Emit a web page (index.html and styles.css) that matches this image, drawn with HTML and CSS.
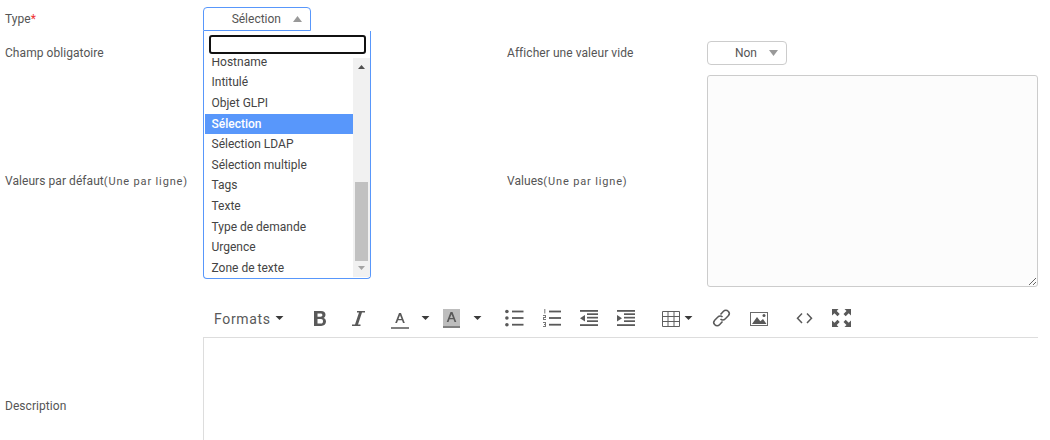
FILE: index.html
```html
<!DOCTYPE html>
<html lang="fr">
<head>
<meta charset="utf-8">
<title>Champ</title>
<link rel="stylesheet" href="styles.css">
</head>
<body>
<form class="form">
  <div class="label">Type<span class="req">*</span></div>
  <div class="field field-type">
    <div class="select select-open"><span class="select-text">Sélection</span><span class="arrow arrow-up"></span></div>
    <div class="dropdown">
      <input class="search" type="text" aria-label="Recherche">
      <div class="results">
        <ul class="options">
          <li>Hostname</li>
          <li>Intitulé</li>
          <li>Objet GLPI</li>
          <li class="active">Sélection</li>
          <li>Sélection LDAP</li>
          <li>Sélection multiple</li>
          <li>Tags</li>
          <li>Texte</li>
          <li>Type de demande</li>
          <li>Urgence</li>
          <li>Zone de texte</li>
        </ul>
        <div class="scrollbar">
          <span class="sb-up"></span>
          <span class="sb-thumb"></span>
          <span class="sb-down"></span>
        </div>
      </div>
    </div>
  </div>
  <div class="spacer"></div>
  <div class="spacer"></div>

  <div class="label">Champ obligatoire</div>
  <div></div>
  <div class="label">Afficher une valeur vide</div>
  <div class="field">
    <div class="select select-non"><span class="select-text">Non</span><span class="arrow arrow-down"></span></div>
  </div>

  <div class="label">Valeurs par défaut<small>(Une par ligne)</small></div>
  <div></div>
  <div class="label">Values<small>(Une par ligne)</small></div>
  <textarea class="area" aria-label="Values"></textarea>

  <div class="label label-desc">Description</div>
  <div class="editor">
    <div class="toolbar">
      <span class="formats">Formats</span><span class="caret c-formats"></span>
      <svg class="ic m26" viewBox="0 0 20 20"><path fill="#595959" fill-rule="evenodd" d="M4 3h7c3 0 4.500 1.500 4.500 3.800 0 1.500-.8 2.600-2 3.200 1.700.5 2.500 1.900 2.500 3.600 0 2.700-2 4.400-4.800 4.400H4zm3.500 2.500v3.300h3c1.200 0 1.900-.6 1.900-1.700s-.7-1.600-1.900-1.600zm0 5.500v4.500h3.500c1.300 0 2-.8 2-2.300s-.7-2.200-2-2.200z"/></svg>
      <svg class="ic m19" viewBox="0 0 20 20"><path fill="#595959" d="M8 3h8v1.600h-3L9 16.400h2.500V18H3v-1.600h3L10 4.600H8z"/></svg>
      <svg class="ic m22" viewBox="0 0 20 20"><path fill="#595959" d="M8 5h2l3.800 10h-1.800l-1-2.800H7l-1 2.800H4.200zm1 2.200-1.500 3.700h3z"/><rect y="19" width="18" height="2" fill="#808080"/></svg>
      <span class="caret m10"></span>
      <svg class="ic m12" viewBox="0 0 20 20"><rect x="1" y="1" width="17" height="17" fill="#bdbdbd"/><path fill="#595959" d="M8.500 4h2l3.800 10h-1.800l-1-2.800H7.500l-1 2.800H4.700zm1 2.200L8 9.900h3z"/><rect x="1" y="18" width="17" height="2" fill="#808080"/></svg>
      <span class="caret m11"></span>
      <svg class="ic m22" viewBox="0 0 20 20"><g fill="#595959"><circle cx="2.900" cy="3.500" r="1.800"/><circle cx="2.900" cy="10" r="1.800"/><circle cx="2.900" cy="16.700" r="1.800"/><rect x="8" y="2.600" width="11.500" height="1.800"/><rect x="8" y="9.100" width="11.500" height="1.800"/><rect x="8" y="15.800" width="11.500" height="1.800"/></g></svg>
      <svg class="ic m18" viewBox="0 0 20 20"><g fill="#595959"><rect x="7" y="2.600" width="12" height="1.800"/><rect x="7" y="9.100" width="12" height="1.800"/><rect x="7" y="15.800" width="12" height="1.800"/><rect x="2.300" y="1" width="1" height="4.500" fill="#777"/><path fill="#777" d="M1 7h3v3H2v1h2v1H1V9h2V8H1zM1 14h3v5H1v-1h2v-1H2v-1h1v-1H1z"/></g></svg>
      <svg class="ic m17" viewBox="0 0 20 20"><g fill="#595959"><rect x="1" y="2" width="18" height="1.800"/><rect x="8" y="5.300" width="11" height="1.700"/><rect x="8" y="8.800" width="11" height="1.700"/><rect x="8" y="12.300" width="11" height="1.700"/><rect x="1" y="16.200" width="18" height="1.800"/><path d="M6 7v6.500l-5-3.200z"/></g></svg>
      <svg class="ic m17" viewBox="0 0 20 20"><g fill="#595959"><rect x="1" y="2" width="18" height="1.800"/><rect x="8" y="5.300" width="11" height="1.700"/><rect x="8" y="8.800" width="11" height="1.700"/><rect x="8" y="12.300" width="11" height="1.700"/><rect x="1" y="16.200" width="18" height="1.800"/><path d="M1 7v6.500l5-3.200z"/></g></svg>
      <svg class="ic m25" viewBox="0 0 20 20"><path fill="none" stroke="#5f5f5f" d="M1.500 3.500h17v15h-17zM1.500 8.500h17M1.500 13.500h17M7 3.500v15M13 3.500v15"/></svg>
      <span class="caret m3"></span>
      <svg class="ic m18" viewBox="0 0 20 20"><g fill="none" stroke="#595959" stroke-width="1.500"><path d="M9.500 6.500l3-3.300a3.200 3.200 0 0 1 4.700 0 3.200 3.200 0 0 1 .1 4.500l-3.200 3.300a3.200 3.200 0 0 1-4.600 0"/><path d="M11.500 13.500l-3 3.300a3.200 3.200 0 0 1-4.700 0 3.200 3.200 0 0 1-.1-4.500l3.200-3.300a3.200 3.200 0 0 1 4.600 0"/></g></svg>
      <svg class="ic m18" viewBox="0 0 20 20"><path fill="#6a6a6a" fill-rule="evenodd" d="M1 4h18v14H1zm1 1v12h16V5z"/><path fill="#595959" d="M3 16 8 9l3.300 4.300L14 11l3.500 5z"/><circle cx="15" cy="7.500" r="1.500" fill="#595959"/></svg>
      <svg class="ic m25" viewBox="0 0 20 20"><path fill="none" stroke="#595959" stroke-width="1.500" d="M8 5.500 3.500 10.200 8 15M13 5.500l4.500 4.700L13 15"/></svg>
      <svg class="ic m17" viewBox="0 0 20 20"><path fill="#595959" d="M1 1h6.500L5.700 3l3 3L6.500 8.200l-3-3L1 7.500zM20 1v6.500l-2.300-2.300-3 3L12.500 6l3-3-2-2zM1 19v-6.500l2.500 2.300 3-3L8.700 14l-3 3 1.800 2zM20 19h-6.500l2-2-3-3 2.200-2.200 3 3 2.300-2.300z"/></svg>
    </div>
    <div class="editor-body"></div>
  </div>
</form>
</body>
</html>
```
FILE: styles.css
```css
* { box-sizing: border-box; }
html, body { margin: 0; height: 100%; overflow: hidden; background: #fff; }
body { font-family: Roboto, "Liberation Sans", sans-serif; font-size: 12px; color: #555; }

.form {
  display: grid;
  grid-template-columns: 198px 304px 200px 331px;
  grid-template-rows: 24px 24px 212px 210px;
  row-gap: 10px;
  padding: 7px 0 0 5px;
  align-items: center;
}
.form > .label-desc { margin-top: 7px; }

.label { letter-spacing: 0.06px; white-space: nowrap; }
.label small { font-size: 11px; letter-spacing: 0.85px; }
.req { color: #e33; }

.field { align-self: stretch; position: relative; }

.select {
  height: 24px;
  display: flex;
  align-items: center;
  justify-content: flex-end;
  background: #fff;
  border: 1px solid #ccc;
  border-radius: 4px;
}
.select-open {
  width: 108px;
  padding-right: 8px;
  border-color: #5897fb;
  border-radius: 4px 4px 0 0;
}
.select-non { width: 80px; padding-right: 8px; }
.select-text { margin-right: 12px; }
.arrow { width: 9px; height: 6px; background: #999; }
.arrow-up { clip-path: polygon(50% 0, 100% 100%, 0 100%); }
.arrow-down { clip-path: polygon(0 0, 100% 0, 50% 100%); }

.dropdown {
  position: absolute;
  top: 24px;
  left: 0;
  z-index: 5;
  width: 168px;
  height: 248px;
  background: #fff;
  border: 1px solid #5897fb;
  border-top: 0;
  border-radius: 0 0 4px 4px;
  padding-top: 4px;
  display: flex;
  flex-direction: column;
}
.search {
  display: block;
  width: 157px;
  height: 19px;
  margin: 0 0 4px 5px;
  padding: 0 4px;
  background: #fff;
  border: 2px solid #111;
  border-radius: 3px;
  outline: none;
  flex: none;
}
.results { flex: none; height: 219px; display: flex; overflow: hidden; margin-left: 1px; }
.options {
  list-style: none;
  margin: -6.200px 0 0;
  padding: 0;
  width: 148px;
  flex: none;
}
.options li {
  height: 20.600px;
  line-height: 20.600px;
  padding-left: 6.500px;
  color: #444;
  white-space: nowrap;
}
.options .active { background: #5897fb; color: #fff; font-weight: 500; }

.scrollbar {
  width: 17px;
  background: #f1f1f1;
  display: flex;
  flex-direction: column;
  align-items: center;
}
.sb-up {
  width: 7px; height: 4px; margin-top: 7px;
  background: #505050;
  clip-path: polygon(50% 0, 100% 100%, 0 100%);
}
.sb-thumb { width: 13px; height: 79px; margin-top: 113px; background: #c1c1c1; }
.sb-down {
  width: 7px; height: 4px; margin-top: 5px;
  background: #a3a3a3;
  clip-path: polygon(0 0, 100% 0, 50% 100%);
}

.area {
  display: block;
  width: 331px;
  height: 212px;
  background: #fcfcfc;
  border: 1px solid #ccc;
  border-radius: 3px;
  outline: none;
  margin: 0;
}

.editor { grid-column: 2 / 5; align-self: stretch; margin-top: 3px; }
.toolbar {
  height: 37px;
  display: flex;
  align-items: center;
  padding: 0 0 1px 11px;
}
.formats { font-size: 14px; color: #595959; letter-spacing: 0.65px; width: 56px; margin-top: 1px; }
.caret {
  width: 9px; height: 4px; flex: none;
  background: #3a3a3a;
  clip-path: polygon(6% 0, 94% 0, 50% 100%);
}
.c-formats { margin-left: 5px; }
.ic { width: 20px; height: 20px; flex: none; overflow: visible; }
.m3 { margin-left: 3px; }
.m10 { margin-left: 10px; }
.m11 { margin-left: 11px; }
.m12 { margin-left: 12px; }
.m17 { margin-left: 17px; }
.m18 { margin-left: 18px; }
.m19 { margin-left: 19px; }
.m22 { margin-left: 22px; }
.m25 { margin-left: 25px; }
.m26 { margin-left: 26px; }
.editor-body { height: 173px; border-top: 1px solid #ddd; border-left: 1px solid #ddd; }
```
